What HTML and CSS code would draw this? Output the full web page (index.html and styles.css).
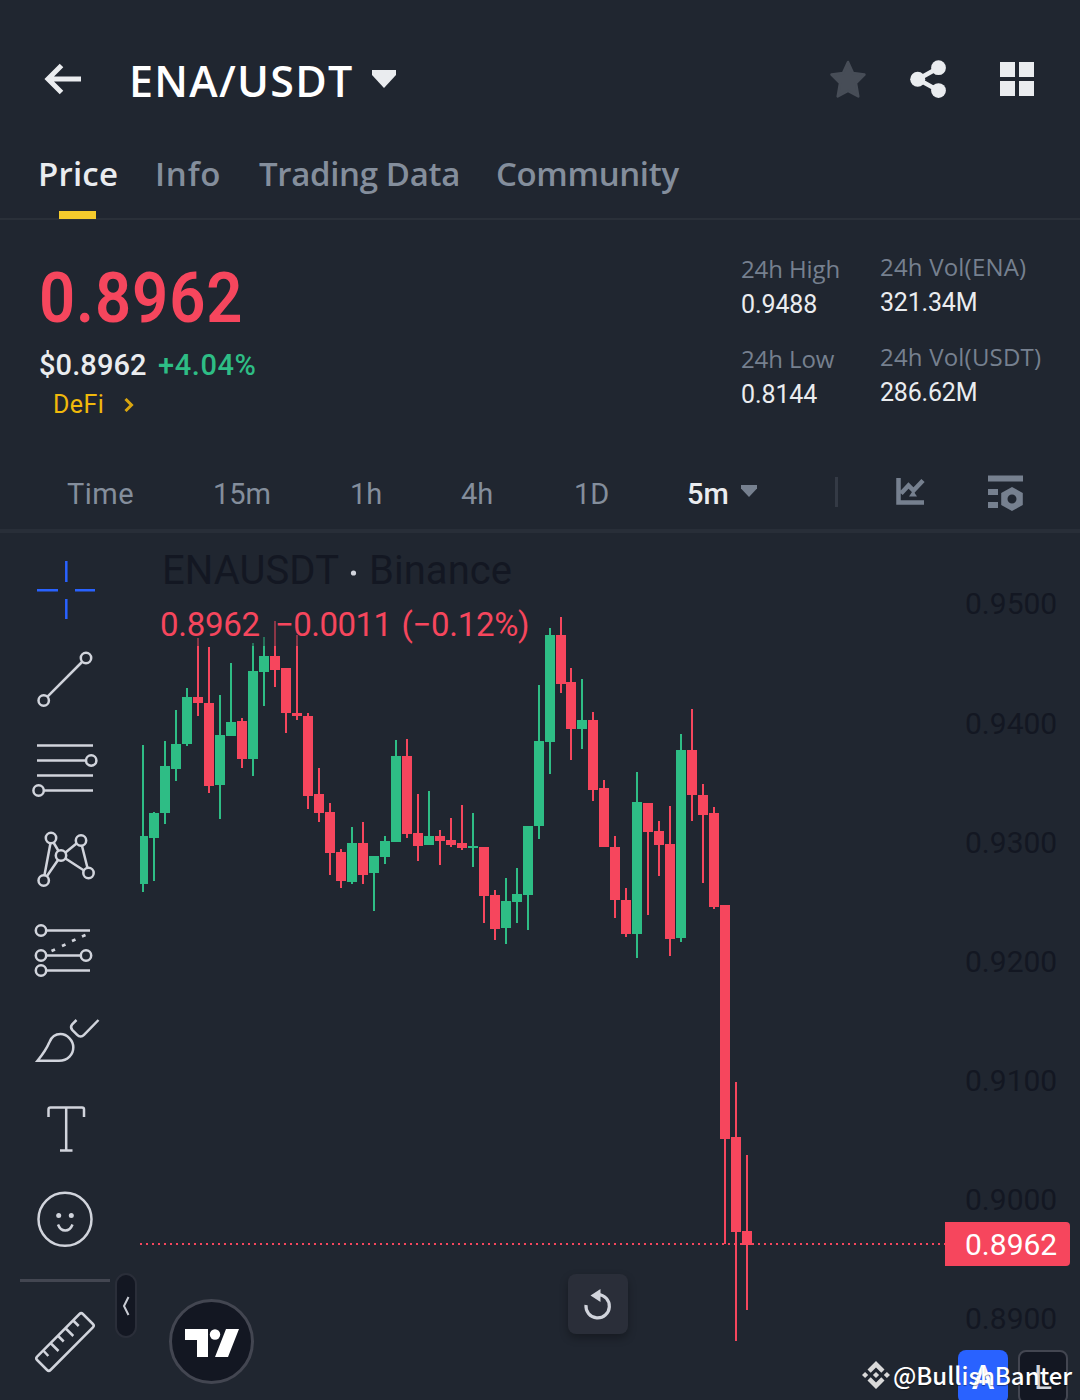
FILE: index.html
```html
<!DOCTYPE html>
<html lang="en">
<head>
<meta charset="utf-8">
<title>ENA/USDT</title>
<link rel="stylesheet" href="styles.css">
</head>
<body>
<div class="app">
  <header class="topbar">
    <svg class="back" width="38" height="32" viewBox="0 0 38 32"><path d="M37 16H6M17.500 2.500L4 16l13.500 13.500" fill="none" stroke="#eaecef" stroke-width="5"/></svg>
    <h1 class="pair">ENA/USDT</h1>
    <svg class="pair-caret" width="24" height="20" viewBox="0 0 24 20"><path d="M0 1h24v5L12 19 0 6z" fill="#eaecef"/></svg>
    <div class="actions">
      <svg width="38" height="40" viewBox="0 0 38 40"><path d="M19 3l5 11 11.500 1.500-8.500 8.500 2.300 13.500L19 32 8.700 37.500 11 24l-8.500-8.500L14 14z" fill="#474d57" stroke="#474d57" stroke-width="2.500" stroke-linejoin="round"/></svg>
      <svg width="37" height="40" viewBox="0 0 37 40"><path d="M28.500 8.700L8 20.300 28.500 31.600" fill="none" stroke="#eaecef" stroke-width="4.500"/><g fill="#eaecef"><circle cx="7.700" cy="20.300" r="7.500"/><circle cx="28.500" cy="8.700" r="7.400"/><circle cx="28.500" cy="31.600" r="7.400"/></g></svg>
      <svg width="34" height="36" viewBox="0 0 34 36"><path d="M0 1h15v15H0zM19 1h15v15H19zM0 20h15v15H0zM19 20h15v15H19z" fill="#eaecef"/></svg>
    </div>
  </header>

  <nav class="tabs">
    <span class="tab active">Price</span>
    <span class="tab info">Info</span>
    <span class="tab">Trading Data</span>
    <span class="tab">Community</span>
  </nav>

  <section class="ticker">
    <div class="quote">
      <div class="last">0.8962</div>
      <div class="fiat"><span class="usd">$0.8962</span><span class="chg">+4.04%</span></div>
      <div class="tag">DeFi<svg width="10" height="14" viewBox="0 0 10 14"><path d="M1.500 1L7.500 7l-6 6" fill="none" stroke="#d9a50f" stroke-width="3"/></svg></div>
    </div>
    <dl class="stats stats-range">
      <dt>24h High</dt><dd>0.9488</dd>
      <dt>24h Low</dt><dd>0.8144</dd>
    </dl>
    <dl class="stats stats-vol">
      <dt>24h Vol(ENA)</dt><dd>321.34M</dd>
      <dt>24h Vol(USDT)</dt><dd>286.62M</dd>
    </dl>
  </section>

  <div class="intervals">
    <span class="time">Time</span><span>15m</span><span>1h</span><span>4h</span><span>1D</span>
    <span class="selected">5m</span>
    <svg class="caret" width="16" height="12" viewBox="0 0 16 12"><path d="M0 0h16v3.500L8 12 0 3.500z" fill="#76808f"/></svg>
    <i class="rule"></i>
    <svg class="chart-type" width="29" height="28" viewBox="0 0 29 28"><path d="M2.500 0v24.500H28M5 15.500l7.500-8 5 5L27 2.500" fill="none" stroke="#76808f" stroke-width="4.500"/><path d="M17 12.500l4 6h-8z" fill="#76808f"/></svg>
    <svg class="chart-settings" width="35" height="37" viewBox="0 0 35 37"><path d="M0 .5h35v6H0zM0 14h10v6H0zM0 27h10v6H0z" fill="#76808f"/><path d="M24 12l10.800 6v12L24 36l-10.800-6v-12zm0 7.500a4.500 4.500 0 100 9 4.500 4.500 0 000-9z" fill="#76808f" fill-rule="evenodd"/></svg>
  </div>

  <main class="workspace">
    <aside class="tools">
      <svg class="tool cross" viewBox="0 545 140 90"><path d="M37 590.300h21M75 590.300h20M66.300 561v21M66.300 599v20"/></svg>
      <svg class="tool" viewBox="0 635 140 90"><path d="M47.500 696.700L82 662"/><circle cx="86" cy="658" r="5.200"/><circle cx="43.700" cy="700.500" r="5.200"/></svg>
      <svg class="tool" viewBox="0 725 140 90"><path d="M37 745.500h56M37 760.500h49M37 775.500h56M44 790.500h49"/><circle cx="91.200" cy="760.500" r="5.200"/><circle cx="38.600" cy="790.500" r="5.200"/></svg>
      <svg class="tool" viewBox="0 815 140 90"><path d="M53.500 842.500l5 8.500M50.500 843l-6 32M58 860l-11 16M65.500 852.500l11-9M82 846l5.500 22M65.500 858.500l18.500 12"/><circle cx="51" cy="838" r="5.200"/><circle cx="81" cy="840.500" r="5.200"/><circle cx="61" cy="855.500" r="5.200"/><circle cx="88.500" cy="873" r="5.200"/><circle cx="43.700" cy="880.500" r="5.200"/></svg>
      <svg class="tool" viewBox="0 905 140 90"><path d="M46.500 930.500H90M46.500 955.500H81M46.500 970.500H90"/><path d="M51.500 951l3.500-1.500M62 946l3.500-1.500M72 941l3.500-1.500M82 936.500l3.500-1.500" stroke-width="2.800"/><circle cx="41" cy="930.500" r="5.200"/><circle cx="41" cy="955.500" r="5.200"/><circle cx="86" cy="955.500" r="5.200"/><circle cx="41" cy="970.500" r="5.200"/></svg>
      <svg class="tool" viewBox="0 995 140 90"><path d="M37.500 1060.800h21.500c9 0 14.300-6.500 14.300-13.500S67 1034 60.500 1034c-5.500 0-9 3-11 8-3 7-6.500 12-12 18.800zM76.500 1020l-4.300 4.300c-1.300 1.600-1.300 4 0 5.600l5 5c2 2 4.800 2 6.800 0L98.500 1020"/></svg>
      <svg class="tool" viewBox="0 1085 140 90"><path d="M48.500 1117v-7.500q0-2 2-2h31.500q2 0 2 2v7.500M66.200 1108v42.500M60 1150.600h12.500"/></svg>
      <svg class="tool" viewBox="0 1175 140 90"><circle cx="65" cy="1219.300" r="26.500"/><path d="M58 1224.500c3 8 11.500 8 14.500 0"/><g class="solid"><circle cx="58.700" cy="1215.500" r="2.500"/><circle cx="71.300" cy="1215.500" r="2.500"/></g></svg>
      <i class="tools-rule"></i>
      <svg class="tool" viewBox="0 1297 140 90"><path d="M79.500 1314q1.700-1.700 3.400 0l10 10q1.700 1.700 0 3.400L50.500 1370q-1.700 1.700-3.400 0l-10-10q-1.700-1.700 0-3.400zM43.300 1350.500l5 5.500M50.500 1343l8 8M57.700 1335.500l6 6M65.300 1328l8 8M72.700 1320l6 6"/></svg>
    </aside>
    <section class="chart">
      <svg class="plot" viewBox="140 533 940 867">
        <g id="candles"></g>
        <rect x="160" y="603" width="370" height="43" fill="#202630" opacity=".5"/>
        <path d="M140 1244H945" stroke="#f6465d" stroke-width="2" stroke-dasharray="2 4"/>
        <g class="legend">
          <text x="162" y="584" textLength="177" class="sym">ENAUSDT</text>
          <circle cx="353.500" cy="573" r="2.600" fill="#d1d4dc"/>
          <text x="369" y="584" textLength="143" class="sym">Binance</text>
          <text x="160" y="636" textLength="100">0.8962</text>
          <text x="275" y="636" textLength="117">−0.0011</text>
          <text x="401.500" y="636" textLength="128">(−0.12%)</text>
        </g>
        <g class="axis">
          <text x="965" y="614">0.9500</text>
          <text x="965" y="734">0.9400</text>
          <text x="965" y="853">0.9300</text>
          <text x="965" y="972">0.9200</text>
          <text x="965" y="1091">0.9100</text>
          <text x="965" y="1210">0.9000</text>
          <text x="965" y="1329">0.8900</text>
          <path d="M945 1222h121a4 4 0 014 4v36a4 4 0 01-4 4H945z" fill="#f6465d"/>
          <text x="965" y="1255" class="now">0.8962</text>
        </g>
      </svg>
      <button class="collapse" aria-label="Collapse"><svg width="8" height="20" viewBox="0 0 8 20"><path d="M6.500 1L2 10l4.500 9" fill="none" stroke="#c9ccd4" stroke-width="2"/></svg></button>
      <div class="tv"><svg width="54" height="28" viewBox="0 0 54 28"><path d="M0 0h23v28H12V11H0zM41 0h13L43 28H30z" fill="#fff"/><circle cx="30" cy="5.500" r="5.200" fill="#fff"/></svg></div>
      <button class="reset" aria-label="Reset"><svg width="30" height="34" viewBox="0 0 30 34"><path d="M3 18A11.700 11.700 0 1015 7.500" fill="none" stroke="#d1d4dc" stroke-width="3.200"/><path d="M7.500 8.500L17.500 2v13z" fill="#d1d4dc"/></svg></button>
      <button class="scale auto">A</button>
      <button class="scale log">L</button>
      <div class="credit"><svg width="28" height="28" viewBox="0 0 28 28"><path d="M14 0l8.500 8.500-3.200 3.200L14 6.400l-5.300 5.300-3.200-3.200zM14 28l8.500-8.500-3.200-3.200L14 21.600l-5.300-5.300-3.200 3.200zM14 10.900l3.100 3.100-3.100 3.100-3.100-3.100zM3.100 10.900L6.200 14l-3.100 3.100L0 14zM24.900 10.900L28 14l-3.100 3.100-3.100-3.100z" fill="#d9d9d9"/></svg><span>@BullishBanter</span></div>
    </section>
  </main>
</div>
<script src="chart.js"></script>
</body>
</html>
```

FILE: styles.css
```css
* { box-sizing: border-box; }
body { margin: 0; background: #202630; color: #eaecef; font-family: Roboto, sans-serif; }
h1, dl, dd { margin: 0; }
svg { display: block; flex: none; }
button { padding: 0; border: 0; font: inherit; }
.app { width: 1080px; height: 1400px; overflow: hidden; display: flex; flex-direction: column; }

.topbar { height: 144px; padding: 16px 46px 0 44px; display: flex; align-items: center; flex: none; }
.topbar { padding-top: 15px; }
.pair { width: 240px; margin-left: 47px; color: #fff; font: 600 43px/60px "Open Sans", sans-serif; white-space: nowrap; letter-spacing: 1.3px; }
.topbar { align-items: flex-start; }
.topbar .back { margin-top: 48px; }
.topbar .pair { margin-top: 36px; }
.topbar .pair-caret { margin: 54px 0 0 3px; }
.actions { display: flex; align-items: center; margin: 44px 0 0 auto; }
.actions svg:nth-child(2) { margin-left: 43px; }
.actions svg:nth-child(3) { margin-left: 53px; }

.tabs { height: 76px; flex: none; padding: 7px 0 0 38px; display: grid; grid-template-columns: 117px 104px 237px 200px; border-bottom: 2px solid #2a3039; }
.tab { position: relative; font: 600 33px/46px "Open Sans", sans-serif; color: #848e9c; white-space: nowrap; letter-spacing: -.35px; }
.tab.active { color: #eaecef; letter-spacing: .2px; }
.tab.info { letter-spacing: .8px; }
.tab.active::after { content: ""; position: absolute; left: 21px; top: 60px; width: 37px; height: 8px; background: #f5cb2c; }

.ticker { height: 235px; flex: none; display: flex; padding: 0 0 0 39px; }
.quote { width: 702px; }
.last { margin-top: 38px; width: 240px; height: 80px; font-size: 70px; line-height: 80px; font-weight: 600; color: #f6465d; letter-spacing: 1px; transform: scaleX(.905); transform-origin: left; }
.fiat { display: flex; height: 40px; margin-top: 7px; font-size: 29px; line-height: 40px; font-weight: 500; }
.usd { width: 119px; letter-spacing: .1px; }
.chg { color: #2ebd85; letter-spacing: .6px; }
.tag { display: flex; align-items: center; gap: 20px; margin: 2px 0 0 14px; font-size: 25px; line-height: 36px; color: #f0b90b; letter-spacing: .4px; }
.stats { white-space: nowrap; font-size: 25px; }
.stats-range { width: 139px; margin-top: 31px; }
.stats-vol { margin-top: 29px; }
.stats dt { height: 36px; line-height: 36px; color: #76808f; font-family: "Open Sans", sans-serif; font-size: 24px; }
.stats-range dt { letter-spacing: -.1px; }
.stats-vol dt { letter-spacing: .2px; }
.stats dd { height: 35px; line-height: 35px; margin-bottom: 19px; letter-spacing: -.1px; }
.stats-vol dd { letter-spacing: -.2px; }

.intervals { height: 78px; flex: none; padding: 20px 0 0 67px; display: grid; grid-template-columns: 146px 137px 111px 113px 113px 54px 94px 61px 92px 40px; align-items: start; font-size: 29px; line-height: 38px; color: #848e9c; border-bottom: 4px solid #282e38; }
.intervals .time { letter-spacing: .5px; }
.intervals .selected { color: #eaecef; font-weight: 500; }
.intervals .caret { margin-top: 10px; }
.intervals .rule { width: 3px; height: 30px; margin-top: 2px; background: #343a45; }
.intervals .chart-type { margin-top: 3px; }

.workspace { flex: 1; display: flex; min-height: 0; }
.tools { width: 140px; padding-top: 12px; flex: none; }
.tool { width: 140px; height: 90px; fill: none; stroke: #d1d4dc; stroke-width: 2.500; }
.tool.cross { stroke: #2962ff; }
.tool .solid { fill: #d1d4dc; stroke: none; }
.tools-rule { display: block; width: 90px; height: 3px; margin: 14px 0 15px 20px; background: #434651; }
.chart { position: relative; width: 940px; }
.plot { width: 940px; height: 867px; }
.up { fill: #2ebd85; }
.down { fill: #f6465d; }
.legend { font-size: 33px; fill: #f6465d; }
.legend .sym { font-size: 40px; fill: #131722; }
.axis { font-size: 30px; fill: #131722; }
.axis .now { fill: #fff; }

.collapse { position: absolute; left: -25px; top: 740px; width: 22px; height: 65px; display: flex; align-items: center; justify-content: center; background: #131722; border: 2px solid #2a2e39; border-radius: 11px; }
.tv { position: absolute; left: 29px; top: 766px; width: 85px; height: 85px; display: flex; align-items: center; justify-content: center; padding-top: 2px; background: #131722; border: 3px solid #434651; border-radius: 50%; }
.reset { position: absolute; left: 428px; top: 741px; width: 60px; height: 60px; display: flex; align-items: center; justify-content: center; background: #2a2e39; border-radius: 8px; box-shadow: 0 4px 8px rgba(0,0,0,.3); }
.scale { position: absolute; top: 817px; width: 50px; height: 54px; border-radius: 8px; font-size: 34px; line-height: 52px; text-align: center; }
.auto { left: 818px; background: #2962ff; color: #fff; font-weight: 500; }
.log { left: 878px; background: #131722; border: 2px solid #434651; color: #d1d4dc; line-height: 48px; }
.credit { position: absolute; left: 722px; top: 824px; display: flex; align-items: center; gap: 3px; color: #fff; font: 500 24px/36px "Noto Sans CJK SC", "Noto Sans", sans-serif; white-space: nowrap; text-shadow: 0 1px 1px rgba(0,0,0,.4); }
```

FILE: chart.js
```js
// One row per candle: body left edge, wick top, body top, body bottom, wick bottom, rising
const candles = [
  [139,745,836,884,892,1],[149,812,813,838,881,1],[160,741,766,813,824,1],[171,710,744,769,781,1],
  [182,688,697,744,746,1],[193,638,697,703,716,0],[204,647,703,786,793,0],[215,695,735,785,819,1],
  [226,663,722,736,736,1],[237,718,721,759,768,0],[248,643,671,759,776,1],[259,637,656,672,706,1],
  [270,621,656,670,687,0],[281,668,668,713,733,0],[292,635,713,716,720,0],[303,713,716,796,809,0],
  [314,768,794,813,822,0],[325,803,812,853,875,0],[336,849,852,881,888,0],[347,827,843,882,884,1],
  [358,822,843,875,884,0],[369,856,856,873,911,1],[380,836,841,857,864,1],[391,740,756,842,842,1],
  [402,739,756,834,838,0],[413,794,833,846,861,0],[424,791,836,845,845,1],[435,830,836,841,865,0],
  [446,818,840,845,847,0],[457,805,843,848,850,0],[468,813,846,848,867,1],[479,847,847,896,923,0],
  [490,890,895,929,940,0],[501,878,901,928,944,1],[512,868,894,902,923,1],[523,826,826,895,930,1],
  [534,685,741,826,839,1],[545,628,635,742,774,1],[556,617,635,684,693,0],[566,668,682,729,760,0],
  [577,679,720,729,749,1],[588,712,720,790,801,0],[599,780,788,847,847,0],[610,836,847,900,918,0],
  [621,888,900,934,937,0],[632,772,802,934,958,1],[643,803,803,832,915,0],[654,821,831,845,876,0],
  [665,806,844,939,956,0],[676,734,750,938,942,1],[687,709,750,795,821,0],[698,784,795,815,883,0],
  [709,807,813,907,909,0],[720,905,905,1139,1244,0],[731,1082,1137,1232,1341,0],[742,1155,1231,1245,1310,0]
];
const group = document.getElementById('candles');
for (const [x, high, top, bottom, low, rising] of candles) {
  const bodyX = Math.max(x, 140);
  const path = document.createElementNS('http://www.w3.org/2000/svg', 'path');
  path.setAttribute('class', rising ? 'up' : 'down');
  path.setAttribute('d', `M${x === 139 ? 142 : x + 4} ${high}h2V${low}h-2zM${bodyX} ${top}H${x === 139 ? 148 : x + 10}V${bottom}H${bodyX}z`);
  group.appendChild(path);
}
```
